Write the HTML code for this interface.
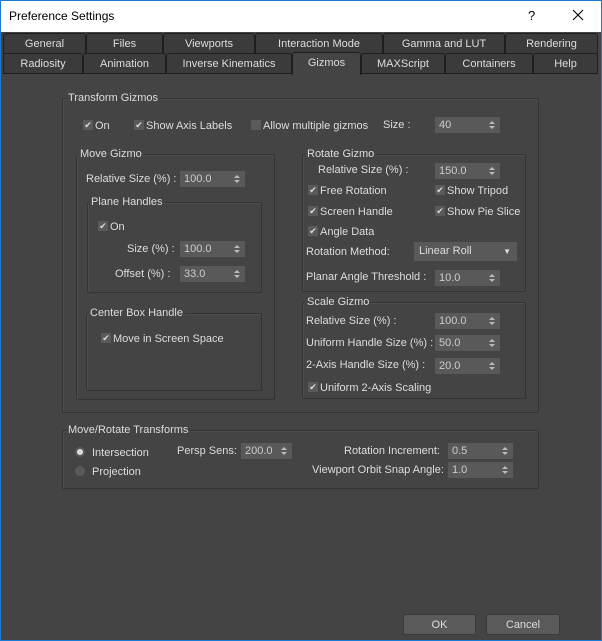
<!DOCTYPE html><html><head><style>
*{box-sizing:border-box;margin:0;padding:0}
body{width:602px;height:641px;position:relative;background:#444;font-family:"Liberation Sans",sans-serif;font-size:11px;color:#ddd;overflow:hidden}
.a{position:absolute}
#win{position:absolute;left:0;top:0;width:602px;height:641px;border:1px solid #1a7ad4}
#title{left:0;top:0;width:602px;height:32px;background:#fff;color:#000;font-size:12px}
.tab{position:absolute;height:21px;background:#3b3b3b;border:1px solid #1e1e1e;border-bottom:none;border-radius:3px 3px 0 0;text-align:center;line-height:20px;color:#ddd}
.g{position:absolute;border:1px solid #333;border-radius:2px;box-shadow:inset 1px 1px 0 #4e4e4e}
.gl{position:absolute;background:#444;padding:0 2px;line-height:12px}
.sp{position:absolute;width:65px;height:16px;background:#595959;color:#ccc;line-height:16px;padding-left:4px}
.sp:after{content:"";position:absolute;right:5px;top:4px;border:3px solid transparent;border-bottom:3px solid #bbb;border-top:none}
.sp:before{content:"";position:absolute;right:5px;top:9px;border:3px solid transparent;border-top:3px solid #bbb;border-bottom:none}
.cb{position:absolute;line-height:12px;padding-left:12px}
.cb:before{content:"✔";position:absolute;left:0;top:0;width:10px;height:10px;background:#5a5a5a;color:#ddd;font-size:9px;line-height:10px;text-align:center}
.cb.off:before{content:""}
.t{position:absolute;line-height:12px}
.btn{position:absolute;background:#5a5a5a;border:1px solid #3a3a3a;text-align:center;line-height:20px;border-radius:2px}
</style></head><body>
<div class="a" id="title"><span class="a" style="left:9px;top:9px">Preference Settings</span><span class="a" style="left:528px;top:8px;font-size:13px">?</span><svg class="a" style="left:572px;top:9px" width="12" height="12"><path d="M1 1L11 11M11 1L1 11" stroke="#000" stroke-width="1.1"/></svg></div>
<div class="a" style="left:0;top:32px;width:602px;height:41px;background:#444"></div>
<div class="tab" style="left:3px;top:33px;width:83px">General</div>
<div class="tab" style="left:86px;top:33px;width:77px">Files</div>
<div class="tab" style="left:163px;top:33px;width:92px">Viewports</div>
<div class="tab" style="left:255px;top:33px;width:128px">Interaction Mode</div>
<div class="tab" style="left:383px;top:33px;width:122px">Gamma and LUT</div>
<div class="tab" style="left:505px;top:33px;width:93px">Rendering</div>
<div class="tab" style="left:3px;top:53px;width:80px">Radiosity</div>
<div class="tab" style="left:83px;top:53px;width:83px">Animation</div>
<div class="tab" style="left:166px;top:53px;width:126px">Inverse Kinematics</div>
<div class="tab" style="left:292px;top:52px;width:69px;height:23px;background:#444;z-index:2">Gizmos</div>
<div class="tab" style="left:361px;top:53px;width:84px">MAXScript</div>
<div class="tab" style="left:445px;top:53px;width:88px">Containers</div>
<div class="tab" style="left:533px;top:53px;width:65px">Help</div>
<div class="a" style="left:3px;top:73px;width:595px;height:1px;background:#1e1e1e"></div>

<div class="g" style="left:62px;top:98px;width:477px;height:315px"></div><div class="gl" style="left:66px;top:92px">Transform Gizmos</div>
<div class="cb" style="left:83px;top:120px">On</div>
<div class="cb" style="left:134px;top:120px">Show Axis Labels</div>
<div class="cb off" style="left:251px;top:120px">Allow multiple gizmos</div>
<div class="t" style="left:383px;top:119px">Size :</div><div class="sp" style="left:435px;top:117px">40</div>

<div class="g" style="left:76px;top:154px;width:199px;height:246px"></div><div class="gl" style="left:78px;top:148px">Move Gizmo</div>
<div class="t" style="left:86px;top:173px">Relative Size (%) :</div><div class="sp" style="left:180px;top:171px">100.0</div>
<div class="g" style="left:87px;top:202px;width:175px;height:91px"></div><div class="gl" style="left:89px;top:196px">Plane Handles</div>
<div class="cb" style="left:98px;top:221px">On</div>
<div class="t" style="left:127px;top:243px">Size (%) :</div><div class="sp" style="left:180px;top:241px">100.0</div>
<div class="t" style="left:115px;top:268px">Offset (%) :</div><div class="sp" style="left:180px;top:266px">33.0</div>
<div class="g" style="left:86px;top:313px;width:176px;height:78px"></div><div class="gl" style="left:88px;top:307px">Center Box Handle</div>
<div class="cb" style="left:101px;top:333px">Move in Screen Space</div>

<div class="g" style="left:302px;top:154px;width:224px;height:138px"></div><div class="gl" style="left:305px;top:148px">Rotate Gizmo</div>
<div class="t" style="left:318px;top:164px">Relative Size (%) :</div><div class="sp" style="left:435px;top:163px">150.0</div>
<div class="cb" style="left:308px;top:185px">Free Rotation</div><div class="cb" style="left:435px;top:185px">Show Tripod</div>
<div class="cb" style="left:308px;top:206px">Screen Handle</div><div class="cb" style="left:435px;top:206px">Show Pie Slice</div>
<div class="cb" style="left:308px;top:226px">Angle Data</div>
<div class="t" style="left:306px;top:246px">Rotation Method:</div>
<div class="a" style="left:414px;top:242px;width:103px;height:19px;background:#595959;line-height:19px;padding-left:5px">Linear Roll<span class="a" style="right:6px;top:0;font-size:8px">▼</span></div>
<div class="t" style="left:306px;top:271px">Planar Angle Threshold :</div><div class="sp" style="left:435px;top:270px">10.0</div>

<div class="g" style="left:302px;top:302px;width:224px;height:97px"></div><div class="gl" style="left:305px;top:296px">Scale Gizmo</div>
<div class="t" style="left:306px;top:315px">Relative Size (%) :</div><div class="sp" style="left:435px;top:313px">100.0</div>
<div class="t" style="left:306px;top:337px">Uniform Handle Size (%) :</div><div class="sp" style="left:435px;top:335px">50.0</div>
<div class="t" style="left:306px;top:359px">2-Axis Handle Size (%) :</div><div class="sp" style="left:435px;top:358px">20.0</div>
<div class="cb" style="left:308px;top:382px">Uniform 2-Axis Scaling</div>

<div class="g" style="left:62px;top:430px;width:477px;height:59px"></div><div class="gl" style="left:66px;top:424px">Move/Rotate Transforms</div>
<div class="a" style="left:75px;top:447px;width:10px;height:10px;border-radius:50%;background:#5a5a5a"><div class="a" style="left:2px;top:2px;width:6px;height:6px;border-radius:50%;background:#ddd"></div></div>
<div class="t" style="left:92px;top:447px">Intersection</div>
<div class="a" style="left:75px;top:466px;width:10px;height:10px;border-radius:50%;background:#5a5a5a"></div>
<div class="t" style="left:92px;top:466px">Projection</div>
<div class="t" style="left:177px;top:445px">Persp Sens:</div><div class="sp" style="left:241px;top:443px;width:51px">200.0</div>
<div class="t" style="left:344px;top:445px">Rotation Increment:</div><div class="sp" style="left:448px;top:443px">0.5</div>
<div class="t" style="left:312px;top:464px">Viewport Orbit Snap Angle:</div><div class="sp" style="left:448px;top:462px">1.0</div>

<div class="btn" style="left:403px;top:614px;width:73px;height:21px">OK</div>
<div class="btn" style="left:486px;top:614px;width:74px;height:21px">Cancel</div>
<div id="win"></div>
</body></html>
